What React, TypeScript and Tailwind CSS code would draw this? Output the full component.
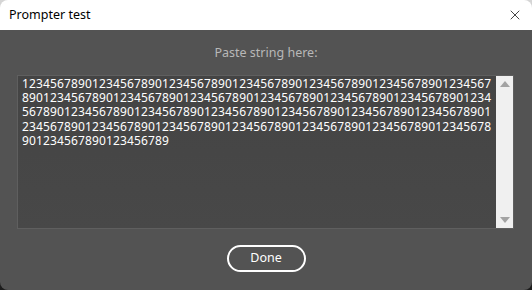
import { X } from "lucide-react";

const text = [
  "1234567890123456789012345678901234567890123456789012345678901234567",
  "8901234567890123456789012345678901234567890123456789012345678901234",
  "5678901234567890123456789012345678901234567890123456789012345678901",
  "2345678901234567890123456789012345678901234567890123456789012345678",
  "901234567890123456789",
].join("\n");

export default function App() {
  return (
    <div className="w-[532px] h-[290px] bg-gradient-to-b from-[#d6d6d6] to-[#1c1c1c] font-['Noto_Sans','Open_Sans',sans-serif]">
      <div className="w-full h-full flex flex-col rounded-[8px] overflow-hidden">
        {/* title bar */}
        <div className="h-[30px] bg-white flex items-center justify-between pl-[9px] pr-[9px]">
          <span className="text-[12.5px] text-black leading-none">Prompter test</span>
          <X size={16} strokeWidth={1.1} className="text-black" />
        </div>

        <div className="flex-1 bg-[#535353] flex flex-col items-center pt-[14px]">
          <p className="text-[12.5px] leading-[18px] text-[#b8b8b8]">Paste string here:</p>

          <div className="mt-[13px] ml-[17px] mr-[18px] self-stretch h-[154px] flex border border-[#5f5f5f] bg-gradient-to-b from-[#444444] to-[#484848]">
            <div className="flex-1 pl-[4px] pt-[1px] text-[12px] leading-[14.2px] tracking-[0.14px] text-white whitespace-pre">
              {text}
            </div>
            <div className="w-[17px] bg-[#f0f0f0] flex flex-col items-center justify-between py-[5px]">
              <div className="w-0 h-0 border-l-[5px] border-r-[5px] border-b-[6px] border-l-transparent border-r-transparent border-b-[#a3a3a3]" />
              <div className="w-0 h-0 border-l-[5px] border-r-[5px] border-t-[6px] border-l-transparent border-r-transparent border-t-[#a3a3a3]" />
            </div>
          </div>

          <button className="mt-[16px] w-[79px] h-[27px] rounded-full border-2 border-white text-white text-[12.5px] leading-none">
            Done
          </button>
        </div>
      </div>
    </div>
  );
}
